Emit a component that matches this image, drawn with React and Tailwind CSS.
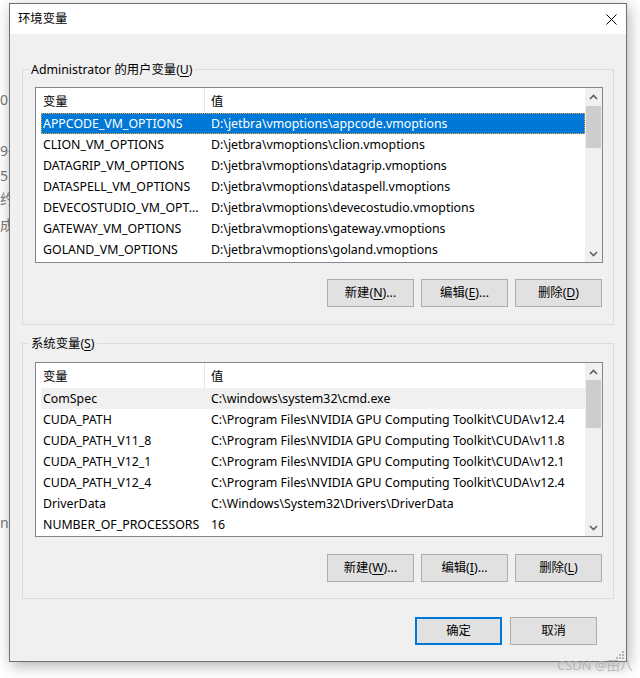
import React from 'react';

const userVars = [
  { name: 'APPCODE_VM_OPTIONS', value: 'D:\\jetbra\\vmoptions\\appcode.vmoptions' },
  { name: 'CLION_VM_OPTIONS', value: 'D:\\jetbra\\vmoptions\\clion.vmoptions' },
  { name: 'DATAGRIP_VM_OPTIONS', value: 'D:\\jetbra\\vmoptions\\datagrip.vmoptions' },
  { name: 'DATASPELL_VM_OPTIONS', value: 'D:\\jetbra\\vmoptions\\dataspell.vmoptions' },
  { name: 'DEVECOSTUDIO_VM_OPT...', value: 'D:\\jetbra\\vmoptions\\devecostudio.vmoptions' },
  { name: 'GATEWAY_VM_OPTIONS', value: 'D:\\jetbra\\vmoptions\\gateway.vmoptions' },
  { name: 'GOLAND_VM_OPTIONS', value: 'D:\\jetbra\\vmoptions\\goland.vmoptions' },
];

const cuda = 'C:\\Program Files\\NVIDIA GPU Computing Toolkit\\CUDA\\';

const systemVars = [
  { name: 'ComSpec', value: 'C:\\windows\\system32\\cmd.exe' },
  { name: 'CUDA_PATH', value: cuda + 'v12.4' },
  { name: 'CUDA_PATH_V11_8', value: cuda + 'v11.8' },
  { name: 'CUDA_PATH_V12_1', value: cuda + 'v12.1' },
  { name: 'CUDA_PATH_V12_4', value: cuda + 'v12.4' },
  { name: 'DriverData', value: 'C:\\Windows\\System32\\Drivers\\DriverData' },
  { name: 'NUMBER_OF_PROCESSORS', value: '16' },
];

const Chevron = ({ down }) => (
  <svg width="9" height="6" viewBox="0 0 9 6" className={down ? 'rotate-180' : ''}>
    <path d="M1 5 L4.5 1.5 L8 5" fill="none" stroke="#606060" strokeWidth="1.6" />
  </svg>
);

const ScrollBar = ({ thumbTop, thumbHeight }) => (
  <div className="w-[17px] bg-[#f0f0f0] flex flex-col">
    <div className="h-[17px] flex items-center justify-center">
      <Chevron />
    </div>
    <div className={`mx-[1px] bg-[#cdcdcd] ${thumbTop} ${thumbHeight}`} />
    <div className="flex-1" />
    <div className="h-[17px] flex items-center justify-center">
      <Chevron down />
    </div>
  </div>
);

const VarList = ({ rows, selected, focused, height, thumbTop, thumbHeight }) => (
  <div className={`border border-[#828790] bg-white flex overflow-hidden ${height}`}>
    <div className="flex-1 pl-[5px] overflow-hidden">
      <div className="h-[25px] flex">
        <div className="w-[164px] border-r border-[#e5e5e5] pl-[2px] pt-[4px] flex items-center">变量</div>
        <div className="pl-[6px] pt-[4px] flex items-center">值</div>
      </div>
      {rows.map((row, i) => {
        let rowClass = '';
        if (i === selected) {
          rowClass = focused
            ? 'bg-[#0078d7] text-white outline-1 outline-dotted -outline-offset-1 outline-[#f2a33a]'
            : 'bg-[#f0f0f0]';
        }
        return (
          <div key={row.name + i} className={`h-[21px] pt-[2px] flex items-center whitespace-nowrap ${rowClass}`}>
            <div className="w-[164px] pl-[2px] shrink-0">{row.name}</div>
            <div className="pl-[6px]">{row.value}</div>
          </div>
        );
      })}
    </div>
    <ScrollBar thumbTop={thumbTop} thumbHeight={thumbHeight} />
  </div>
);

const Button = ({ children, primary }) => (
  <button
    className={`w-[87px] h-[28px] bg-[#e1e1e1] flex items-center justify-center ${
      primary ? 'border-2 border-[#0078d7]' : 'border border-[#adadad]'
    }`}
  >
    {children}
  </button>
);

const Mn = ({ label, k, after = '' }) => (
  <span>
    {label}(<span className="underline underline-offset-2">{k}</span>){after}
  </span>
);

const Group = ({ title, children, className = '' }) => (
  <div className={`border border-[#dcdcdc] pl-[12px] pr-[10px] ${className}`}>
    <div className="-mt-[9px] -ml-[6px] px-[2px] w-fit bg-[#f0f0f0] leading-[17px]">{title}</div>
    {children}
  </div>
);

export default function App() {
  return (
    <div className="relative w-[640px] h-[678px] bg-white flex overflow-hidden text-[12.35px] text-black font-['Noto_Sans','Noto_Sans_CJK_SC',sans-serif]">
      {/* bits of the page behind the dialog */}
      <div className="w-[9px] shrink-0 overflow-hidden text-[14px] text-[#777] whitespace-nowrap leading-[18px]">
        <div className="mt-[91px] h-[18px]">0 i</div>
        <div className="mt-[33px] h-[18px]">9-</div>
        <div className="mt-[7px] h-[18px]">5</div>
        <div className="mt-[5px] h-[18px]">约</div>
        <div className="mt-[8px] h-[18px]">成</div>
        <div className="mt-[280px] h-[18px]">nc</div>
      </div>

      <div className="relative mt-[3px] w-[618px] h-[659px] shrink-0 border border-[#6f6f6f] bg-[#f0f0f0] flex flex-col shadow-[2px_4px_14px_rgba(0,0,0,0.3)]">
        <div className="h-[30px] bg-white flex items-center justify-between pl-[8px] pr-[9px]">
          <span className="pt-[1px]">环境变量</span>
          <svg width="11" height="11" viewBox="0 0 11 11">
            <path d="M0.5 0.5 L10.5 10.5 M10.5 0.5 L0.5 10.5" stroke="#000" strokeWidth="1" />
          </svg>
        </div>

        <div className="flex flex-col px-[12px] pt-[35px]">
          <Group title={<Mn label="Administrator 的用户变量" k="U" />} className="pb-[17px]">
            <div className="mt-[9px]">
              <VarList
                rows={userVars}
                selected={0}
                focused
                height="h-[176px]"
                thumbTop="mt-[1px]"
                thumbHeight="h-[42px]"
              />
            </div>
            <div className="mt-[16px] pr-[1px] flex justify-end gap-[7px]">
              <Button><Mn label="新建" k="N" after="..." /></Button>
              <Button><Mn label="编辑" k="E" after="..." /></Button>
              <Button><Mn label="删除" k="D" /></Button>
            </div>
          </Group>

          <Group title={<Mn label="系统变量" k="S" />} className="mt-[18px] pb-[16px]">
            <div className="mt-[10px]">
              <VarList
                rows={systemVars}
                selected={0}
                height="h-[175px]"
                thumbTop="mt-0"
                thumbHeight="h-[48px]"
              />
            </div>
            <div className="mt-[17px] pr-[1px] flex justify-end gap-[7px]">
              <Button><Mn label="新建" k="W" after="..." /></Button>
              <Button><Mn label="编辑" k="I" after="..." /></Button>
              <Button><Mn label="删除" k="L" /></Button>
            </div>
          </Group>

          <div className="mt-[18px] flex justify-end gap-[8px] pr-[17px]">
            <Button primary>确定</Button>
            <Button>取消</Button>
          </div>
        </div>

        <svg width="8" height="8" viewBox="0 0 8 8" className="absolute right-[2px] bottom-[2px]">
          <g fill="#b8b8b8">
            <rect x="6" y="0" width="2" height="2" />
            <rect x="3" y="3" width="2" height="2" />
            <rect x="6" y="3" width="2" height="2" />
            <rect x="0" y="6" width="2" height="2" />
            <rect x="3" y="6" width="2" height="2" />
            <rect x="6" y="6" width="2" height="2" />
          </g>
        </svg>
      </div>

      <div className="absolute left-[557px] top-[657px] text-[13px] leading-[17px] text-[rgba(170,170,170,0.75)]">
        CSDN @田八
      </div>
    </div>
  );
}
